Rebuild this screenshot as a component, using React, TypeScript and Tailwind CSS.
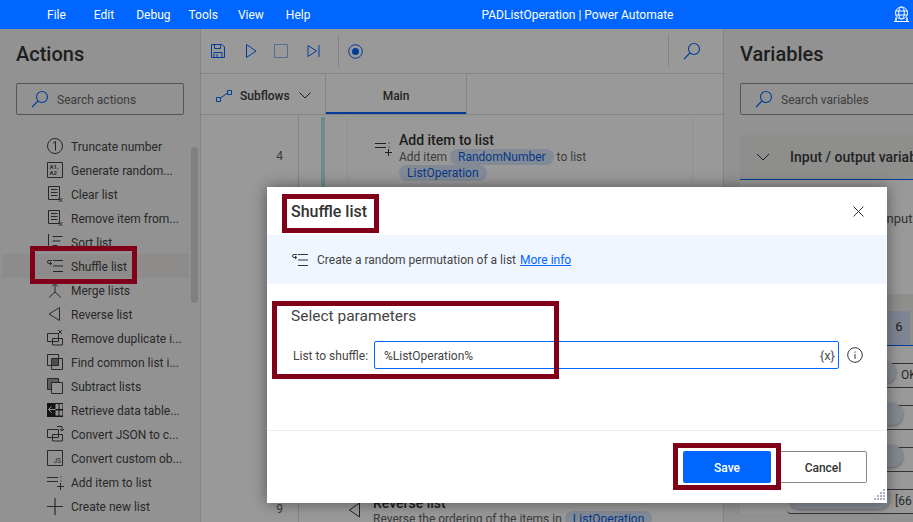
import React from "react";

const I = ({ children, w = 18, h = 18, className = "" }: { children: React.ReactNode; w?: number; h?: number; className?: string }) => (
  <svg width={w} height={h} viewBox={`0 0 ${w} ${h}`} fill="none" stroke="currentColor" strokeWidth="1" className={"shrink-0 " + className}>
    {children}
  </svg>
);

const ListX = () => (
  <I>
    <path d="M2.500 1.500h11v13h-11zM5 4.500h6.500M5 7.500h6.500M5 10.500h6.500" />
    <path d="M12.500 13l4 4M16.500 13l-4 4" />
  </I>
);
const ShuffleIcon = () => (
  <I>
    <path d="M7 3.500h10M7 9h10M7 14.500h10" />
    <path d="M6 3.500H3Q1.500 3.500 1.500 5 1.500 6.500 3 6.500H5.500M4 5 5.800 6.500 4 8" />
  </I>
);
const AddIcon = () => (
  <I>
    <path d="M1 4.500h11M1 8.500h11M15 3.500v1M15 7.500v1M11 13.500h7M14.500 10v7" />
  </I>
);
const icons: Record<string, React.ReactNode> = {
  one: (
    <I>
      <circle cx="9" cy="9" r="7.500" />
      <path d="M7 6.500 9.500 4.500V13.500" />
    </I>
  ),
  a1: (
    <I>
      <path d="M1.500 1.500h15v15h-15z" />
      <text x="3.500" y="7.800" fontSize="6" fontWeight="700" fill="currentColor" stroke="none">A1,</text>
      <text x="3.500" y="14.300" fontSize="6" fontWeight="700" fill="currentColor" stroke="none">A2</text>
    </I>
  ),
  listx: <ListX />,
  sort: (
    <I>
      <path d="M2.500 1v15M2.500 15.500h3M6.500 3.500h10M6.500 8h8M6.500 12.500h5" />
    </I>
  ),
  shuffle: <ShuffleIcon />,
  merge: (
    <I>
      <path d="M9 3v8M6 5.500 9 2.500 12 5.500M9 11 3 16.500M9 11l6 5.500" />
    </I>
  ),
  reverse: (
    <I>
      <path d="M13.500 2.500v13L3 9z" />
    </I>
  ),
  dup: (
    <I>
      <path d="M1.500 4.500h11v8h-11zM6.500 9.500h10v6.500h-10z" />
      <path d="M12 1l4 4M16 1l-4 4" />
    </I>
  ),
  common: (
    <I>
      <path d="M1.500 1.500h11v11h-11zM5.500 5.500h11v11h-11z" />
      <path d="M6 6h6.500v6.500H6z" fill="currentColor" stroke="none" opacity=".65" />
    </I>
  ),
  subtract: (
    <I>
      <path d="M1.500 1.500h11v11h-11z" fill="currentColor" fillOpacity=".5" />
      <path d="M5.500 5.500h11v11h-11z" fill="#f4f4f4" />
    </I>
  ),
  retrieve: (
    <I>
      <path d="M1 2h16v14H1z" fill="#222" stroke="none" />
      <path d="M9.500 3h3v5h-3zM13.500 3h3v5h-3zM9.500 9.500h3v5h-3zM13.500 9.500h3v5h-3z" fill="#f4f4f4" stroke="none" />
      <path d="M9.500 8.500H2.500M5.500 5.500l-3 3 3 3" stroke="#f4f4f4" />
    </I>
  ),
  json: (
    <I>
      <path d="M1.500 4.500h11v8h-11zM6.500 9.500h10v6.500h-10zM11 1.500h5v4M14 4l2 2 2-2" />
    </I>
  ),
  js: (
    <I>
      <path d="M1.500 1.500h15v15h-15z" />
      <text x="7.500" y="14" fontSize="6.500" fill="currentColor" stroke="none">JS</text>
    </I>
  ),
  add: <AddIcon />,
  plus: (
    <I>
      <path d="M9 1v17M1 9.500h16" strokeWidth="1.200" />
    </I>
  ),
};

const actions: [string, string][] = [
  ["one", "Truncate number"],
  ["a1", "Generate random..."],
  ["listx", "Clear list"],
  ["listx", "Remove item from..."],
  ["sort", "Sort list"],
  ["shuffle", "Shuffle list"],
  ["merge", "Merge lists"],
  ["reverse", "Reverse list"],
  ["dup", "Remove duplicate i..."],
  ["common", "Find common list i..."],
  ["subtract", "Subtract lists"],
  ["retrieve", "Retrieve data table..."],
  ["json", "Convert JSON to c..."],
  ["js", "Convert custom ob..."],
  ["add", "Add item to list"],
  ["plus", "Create new list"],
];

const Search = ({ size = 18 }: { size?: number }) => (
  <svg width={size} height={size} viewBox="0 0 18 18" fill="none" stroke="currentColor" strokeWidth="1.100" className="shrink-0">
    <circle cx="11" cy="7" r="5.500" />
    <path d="M7 11 1 17" />
  </svg>
);

const Pill = ({ children }: { children: React.ReactNode }) => (
  <span className="inline-block h-[16px] rounded-full bg-[#d9e6fb] px-[8px] text-[12px] leading-[16px] text-[#0a5fe0]">{children}</span>
);

const SearchBox = ({ label, className }: { label: string; className: string }) => (
  <div className={"flex h-8 items-center rounded-[2px] border border-[#8f8f8f] pl-[14px] text-[#0066ff] " + className}>
    <Search />
    <span className="ml-[8px] mt-[1px] text-[12px] text-[#666]">{label}</span>
  </div>
);

const VarRow = ({ pillW, value }: { pillW: string; value?: string }) => (
  <div className="mt-[17px] flex h-[25px] shrink-0 items-start rounded-l-[4px] border-y border-[#555] pl-[2px] text-[#444]">
    <span className={"-mt-[3px] h-[22px] shrink-0 rounded-full bg-[#dde6f6] shadow-[0_1px_3px_rgba(0,0,0,.35)] " + pillW} />
    {value && <span className="ml-[5px] text-[12px] leading-[22px] whitespace-nowrap">{value}</span>}
  </div>
);

export default function App() {
  return (
    <div className="relative h-[522px] w-[913px] overflow-hidden bg-white font-['Roboto',sans-serif] text-[12px] text-[#3b3b3b]">
      {/* title bar */}
      <header className="relative z-20 flex h-[29px] items-center bg-[#0066ff] text-[12px] text-white">
        <nav className="flex">
          <span className="ml-[47px]">File</span>
          <span className="ml-[28px]">Edit</span>
          <span className="ml-[22px]">Debug</span>
          <span className="ml-[18px]">Tools</span>
          <span className="ml-[20px]">View</span>
          <span className="ml-[22px]">Help</span>
        </nav>
        <span className="ml-[171px]">PADListOperation | Power Automate</span>
        <svg width="17" height="17" viewBox="0 0 17 17" fill="none" stroke="white" strokeWidth="1" className="ml-auto mr-[3px]">
          <circle cx="8.500" cy="7" r="6" />
          <ellipse cx="8.500" cy="7" rx="2.800" ry="6" />
          <path d="M2.500 5h12M2.500 9h12M1 15.500h15" />
          <path d="M3 11.500v4M14 11.500v4" strokeWidth="1.500" />
        </svg>
      </header>

      <div className="flex h-[493px]">
        {/* actions panel */}
        <aside className="relative w-[201px] shrink-0 border-r border-[#dcdcdc] bg-[#f4f4f4]">
          <h2 className="pl-[16px] pt-[10px] text-[20px] font-medium leading-[30px] text-[#333]">Actions</h2>
          <SearchBox label="Search actions" className="mx-[16px] mt-[14px]" />
          <ul className="mt-[19px]">
            {actions.map(([ic, label]) => (
              <li
                key={label}
                className={"flex h-6 w-[187px] ml-[2px] items-center gap-[7px] pl-[44px] whitespace-nowrap text-[#444] " + (label === "Shuffle list" ? "bg-[#ebe9e6]" : "")}
              >
                {icons[ic]}
                <span className="mt-[1px]">{label}</span>
              </li>
            ))}
          </ul>
          <div className="absolute left-[191px] top-[118px] h-[156px] w-[7px] rounded-full bg-[#d6d6d6]" />
        </aside>

        {/* centre */}
        <main className="flex w-[523px] shrink-0 flex-col border-r border-[#dcdcdc]">
          <div className="flex h-[45px] shrink-0 items-center border-b border-[#dcdcdc] text-[#0066ff]">
            <svg width="16" height="16" viewBox="0 0 16 16" fill="none" stroke="currentColor" className="ml-[9px]">
              <path d="M1.500 1.500h10.500l2.500 2.500v10.500h-13zM4.500 1.500v4h6v-4M4 14.500v-5h8v5M7 11v3.500" />
            </svg>
            <svg width="12" height="16" viewBox="0 0 12 16" fill="none" stroke="currentColor" className="ml-[19px]">
              <path d="M1.500 1.500v13L11 8z" />
            </svg>
            <svg width="14" height="14" viewBox="0 0 14 14" fill="none" stroke="#8fb4f0" className="ml-[17px]">
              <path d="M.5.500h13v13H.5z" />
            </svg>
            <svg width="13" height="14" viewBox="0 0 13 14" fill="none" stroke="currentColor" className="ml-[19px]">
              <path d="M1 1.500v11L9.500 7zM12 1v12" />
            </svg>
            <span className="ml-[18px] h-8 w-px bg-[#d8d8d8]" />
            <svg width="15" height="15" viewBox="0 0 15 15" fill="none" stroke="currentColor" className="ml-[9px]">
              <circle cx="7.500" cy="7.500" r="6.800" />
              <circle cx="7.500" cy="7.500" r="3.500" fill="currentColor" stroke="none" />
            </svg>
            <span className="ml-auto h-8 w-px bg-[#d8d8d8]" />
            <span className="ml-[14px] mr-[22px]">
              <Search />
            </span>
          </div>

          <div className="flex h-[41px] shrink-0 border-b border-[#dcdcdc] text-[#3b3b3b]">
            <div className="flex w-[125px] items-center border-r border-[#dcdcdc] pl-[15px] pt-[3px] font-medium">
              <svg width="16" height="14" viewBox="0 0 16 14" fill="none" stroke="#0066ff">
                <path d="M.5 8.500h4v4h-4zM11.500 1.500h4v4h-4zM4.500 9 11.500 4" />
              </svg>
              <span className="ml-[8px]">Subflows</span>
              <svg width="12" height="7" viewBox="0 0 12 7" fill="none" stroke="#333" className="ml-[9px]">
                <path d="M.5.500 6 6l5.500-5.500" />
              </svg>
            </div>
            <div className="flex w-[140px] items-center justify-center border-b-[2px] border-[#0066ff] pt-[6px] font-medium">Main</div>
            <div className="border-l border-[#dcdcdc]" />
          </div>

          <div className="flex min-h-0 flex-1 overflow-hidden">
            <div className="w-[98px] shrink-0 border-r border-[#dcdcdc] text-right text-[#666]">
              <div className="pr-[15px] pt-[32px] text-[12px] leading-[18px]">4</div>
              <div className="pr-[15px] pt-[335px] text-[12px] leading-[18px]">9</div>
            </div>
            <div className="relative flex-1">
              <div className="absolute left-[22px] top-[2px] h-[380px] w-[4px] bg-[#bfe6e6]" />
              <div className="ml-[48px] mr-[30px] mt-[2px] flex h-[69px] border-l border-r border-[#f0f0f0] pl-[26px] pt-[15px]">
                <span className="mt-[7px] w-[18px] text-[#333]">
                  <AddIcon />
                </span>
                <div className="ml-[7px] text-[12px] leading-[16px] text-[#666]">
                  <div className="text-[14px] font-medium text-[#333]">Add item to list</div>
                  <div className="mt-[1px] whitespace-nowrap">
                    Add item <Pill>RandomNumber</Pill> to list
                  </div>
                  <div><Pill>ListOperation</Pill></div>
                </div>
              </div>
              <div className="ml-[48px] mt-[309px] flex">
                <span className="mt-[6px] text-[#333] ml-[2px]">
                  <svg width="12" height="18" viewBox="0 0 12 18" fill="none" stroke="currentColor"><path d="M10.500 2v14L.5 9z" /></svg>
                </span>
                <div className="ml-[12px] text-[12px] leading-[16px] text-[#666]">
                  <div className="text-[14px] font-medium text-[#333]">Reverse list</div>
                  <div className="whitespace-nowrap">Reverse the ordering of the items in <Pill>ListOperation</Pill></div>
                </div>
              </div>
            </div>
          </div>
        </main>

        {/* variables */}
        <aside className="flex min-w-0 flex-1 flex-col overflow-hidden bg-[#f4f4f4] pl-[16px]">
          <h2 className="pt-[10px] text-[20px] font-medium leading-[30px] text-[#333]">Variables</h2>
          <SearchBox label="Search variables" className="mt-[14px] w-[400px] shrink-0" />
          <div className="mt-[20px] flex h-[45px] w-[400px] shrink-0 items-center rounded-t-[4px] border-b border-[#0066ff] bg-[#ededeb] pl-[16px] text-[14px] font-medium whitespace-nowrap">
            <svg width="14" height="8" viewBox="0 0 14 8" fill="none" stroke="#333"><path d="M1 1l6 6 6-6" /></svg>
            <span className="ml-[20px]">Input / output variables</span>
          </div>
          <div className="h-[114px] shrink-0 bg-white pl-[143px] pt-[29px] text-[13px] whitespace-nowrap text-[#555]">Input variables</div>
          <div className="flex h-[52px] w-[400px] shrink-0 items-end border-b border-[#0066ff] bg-[#ededeb] pl-[148px] text-[13px]">
            <span className="flex h-[34px] w-[22px] items-center justify-center pb-[3px] bg-[#d3e0f6] text-[#333]">6</span>
          </div>
          <div className="flex w-[400px] flex-col bg-white pl-[47px]">
            <VarRow pillW="w-[107px]" value="OK" />
            <VarRow pillW="w-[114px]" />
            <VarRow pillW="w-[114px]" />
            <VarRow pillW="w-[101px]" value="[66" />
          </div>
        </aside>
      </div>

      {/* dim layer */}
      <div className="absolute inset-x-0 bottom-0 top-[29px] bg-black/40" />

      {/* annotation on the list */}
      <div className="absolute left-[30px] top-[246px] h-[38px] w-[107px] border-[5px] border-[#7f0018]" />

      {/* dialog */}
      <section className="absolute left-[267px] top-[187px] flex h-[316px] w-[620px] flex-col bg-white shadow-[0_0_14px_rgba(0,0,0,.45)]">
        <div className="flex h-[48px] shrink-0 items-center justify-between pl-[24px] pr-[23px]">
          <h3 className="pt-[2px] text-[16px] font-medium text-[#333]">Shuffle list</h3>
          <svg width="11" height="11" viewBox="0 0 11 11" stroke="#333" fill="none"><path d="M.5.500l10 10M10.500.500l-10 10" /></svg>
        </div>
        <div className="flex h-[49px] shrink-0 items-center bg-[#f0f6ff] pl-[24px] text-[#444]">
          <span className="text-[#333]"><ShuffleIcon /></span>
          <span className="ml-[8px]">Create a random permutation of a list <span className="ml-[1px] text-[#0066ff] underline">More info</span></span>
        </div>
        <div className="pl-[24px] pt-[20px] text-[15.500px] leading-[24px] text-[#444]">Select parameters</div>
        <div className="mt-[13px] flex items-center pl-[26px]">
          <label className="w-[81px] pt-[1px] text-[#444]">List to shuffle:</label>
          <div className="flex h-[28px] w-[465px] items-center justify-between rounded-[2px] border border-[#0066ff] pl-[9px] pr-[3px] pt-[1px] text-[#444]">
            <span>%ListOperation%</span>
            <span className="text-[13px] text-[#555]">{"{x}"}</span>
          </div>
          <svg width="16" height="16" viewBox="0 0 16 16" fill="none" stroke="#333" className="ml-[8px]">
            <circle cx="8" cy="8" r="7.300" />
            <path d="M8 7v5M8 4.500v1.200" />
          </svg>
        </div>
        <div className="mt-auto flex h-[73px] shrink-0 items-start justify-end gap-[8px] border-t border-[#ebebeb] pr-[20px] pt-[20px]">
          <button className="h-[32px] w-[88px] rounded-[2px] bg-[#0066ff] pt-[1px] text-[12px] font-medium text-white">Save</button>
          <button className="h-[32px] w-[88px] rounded-[2px] border border-[#8a8a8a] bg-white pt-[1px] text-[12px] font-medium text-[#333]">Cancel</button>
        </div>
        <svg width="12" height="12" viewBox="0 0 12 12" className="absolute bottom-[2px] right-[2px]" fill="#a9b5c6">
          <path d="M10 0h2v2h-2zM7 3h2v2H7zM10 3h2v2h-2zM4 6h2v2H4zM7 6h2v2H7zM10 6h2v2h-2zM1 9h2v2H1zM4 9h2v2H4zM7 9h2v2H7zM10 9h2v2h-2z" />
        </svg>
      </section>

      {/* annotations on the dialog */}
      <div className="absolute left-[282px] top-[194px] h-[39px] w-[97px] border-[5px] border-[#7f0018]" />
      <div className="absolute left-[272px] top-[301px] h-[78px] w-[287px] border-[5px] border-[#7f0018]" />
      <div className="absolute left-[673px] top-[443px] h-[47px] w-[108px] border-[5px] border-[#7f0018]" />
    </div>
  );
}
